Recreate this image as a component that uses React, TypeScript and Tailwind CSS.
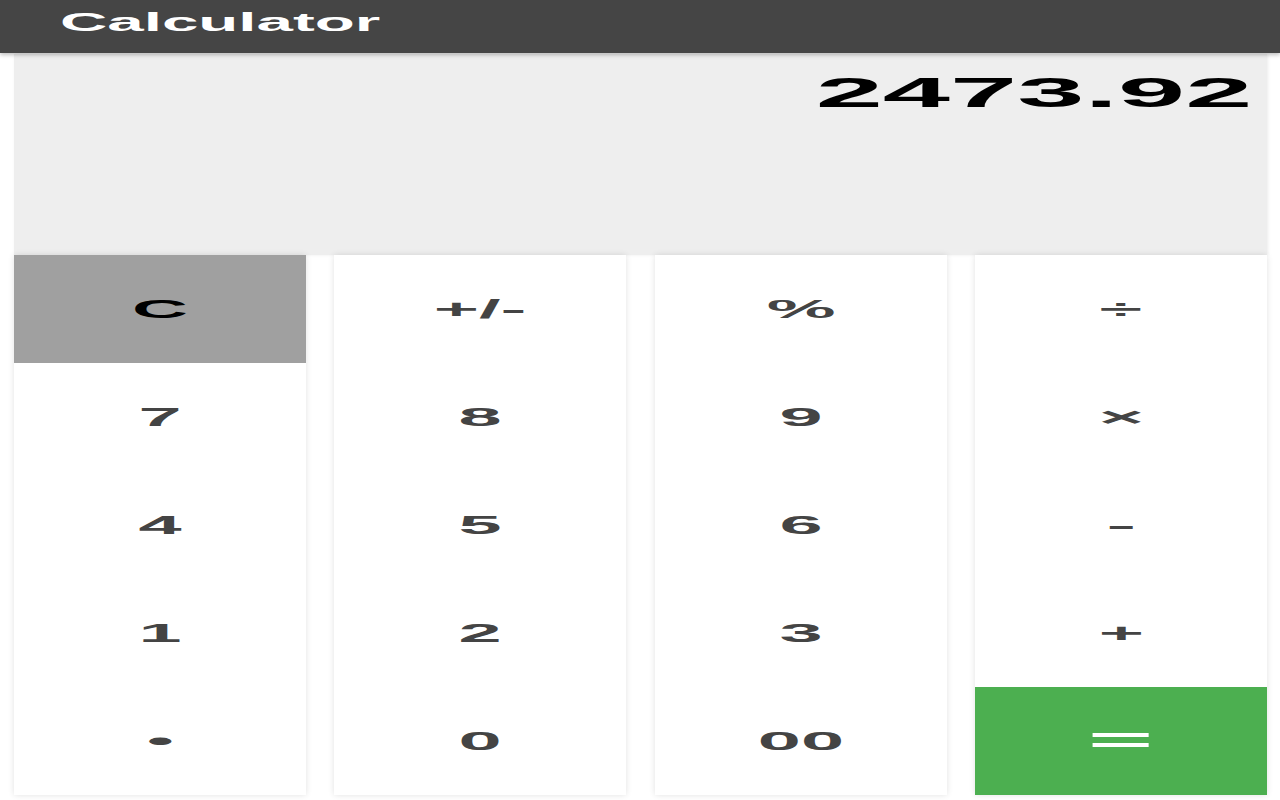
import React from "react";

const font = { fontFamily: '"Liberation Sans", Arial, Helvetica, sans-serif' };

type Btn = { label: string; kind?: "clear" | "equals"; wide?: boolean };

const columns: Btn[][] = [
  [{ label: "C", kind: "clear" }, { label: "7" }, { label: "4" }, { label: "1" }, { label: "•" }],
  [{ label: "+/-" }, { label: "8" }, { label: "5" }, { label: "2" }, { label: "0" }],
  [{ label: "%" }, { label: "9" }, { label: "6" }, { label: "3" }, { label: "00" }],
  [{ label: "÷" }, { label: "×" }, { label: "-", wide: true }, { label: "+" }, { label: "=", kind: "equals" }],
];

function Key({ b }: { b: Btn }) {
  const bg =
    b.kind === "clear" ? "bg-[#a0a0a0]" : b.kind === "equals" ? "bg-[#4caf50]" : "bg-white";
  const color =
    b.kind === "clear" ? "text-black" : b.kind === "equals" ? "text-white" : "text-[#444444]";
  const size =
    b.kind === "equals"
      ? "scale-x-[3.1] text-[36px] leading-[36px]"
      : b.wide
      ? "scale-x-[3.6] text-[25px] leading-[25px]"
      : "scale-x-[3.1] text-[25px] leading-[25px]";
  return (
    <div className={`h-[108px] flex items-center justify-center ${bg}`}>
      <span className={`inline-block ${size} font-bold ${color}`}>{b.label}</span>
    </div>
  );
}

export default function App() {
  return (
    <div className="w-[1280px] h-[800px] bg-white overflow-hidden relative" style={font}>
      <div className="relative z-10 h-[53px] bg-[#454545] shadow-[0_2px_4px_rgba(0,0,0,0.25)] pt-[10px] pl-[60px]">
        <span className="inline-block origin-left scale-x-[2.62] text-[25px] leading-[25px] font-bold text-white">
          Calculator
        </span>
      </div>
      <div className="pl-[14px] pr-[13px] pt-[1px]">
        <div className="h-[201px] bg-[#eeeeee] pt-[17px] pr-[15px] text-right shadow-[1px_0_3px_rgba(0,0,0,0.08)]">
          <span className="inline-block origin-right scale-x-[2.81] text-[43px] leading-[43px] font-bold text-black">
            2473.92
          </span>
        </div>
        <div className="flex justify-between">
          {columns.map((col, i) => (
            <div
              key={i}
              className="w-[292px] flex flex-col bg-white shadow-[0_0_6px_rgba(0,0,0,0.12)]"
            >
              {col.map((b, j) => (
                <Key key={j} b={b} />
              ))}
            </div>
          ))}
        </div>
      </div>
    </div>
  );
}
